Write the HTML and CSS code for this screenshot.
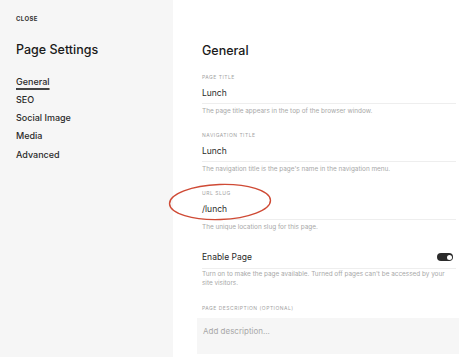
FILE: index.html
```html
<!DOCTYPE html>
<html lang="en">
<head>
	<meta charset="UTF-8">
	<title>Page Settings</title>
	<link rel="stylesheet" href="styles.css">
</head>
<body>
	<div class="panel">
		<aside class="sidebar">
			<div class="close">CLOSE</div>
			<h1 class="sidebar-title">Page Settings</h1>
			<nav class="menu">
				<a class="menu-item active">General</a>
				<a class="menu-item">SEO</a>
				<a class="menu-item">Social Image</a>
				<a class="menu-item">Media</a>
				<a class="menu-item">Advanced</a>
			</nav>
		</aside>

		<main class="content">
			<h2 class="heading">General</h2>

			<div class="field">
				<div class="label">PAGE TITLE</div>
				<div class="value">Lunch</div>
				<div class="hint">The page title appears in the top of the browser window.</div>
			</div>

			<div class="field">
				<div class="label">NAVIGATION TITLE</div>
				<div class="value">Lunch</div>
				<div class="hint">The navigation title is the page's name in the navigation menu.</div>
			</div>

			<div class="field slug">
				<svg class="circle" width="106" height="40" viewBox="0 0 106 40">
					<ellipse cx="53" cy="20" rx="50.5" ry="17.5" fill="none" stroke="#cf4a35" stroke-width="1.4" transform="rotate(-2 53 20)"/>
				</svg>
				<div class="label">URL SLUG</div>
				<div class="value">/lunch</div>
				<div class="hint">The unique location slug for this page.</div>
			</div>

			<div class="toggle-row">
				<span>Enable Page</span>
				<span class="toggle"></span>
			</div>
			<div class="hint hint-tight">Turn on to make the page available. Turned off pages can't be accessed by your site visitors.</div>

			<div class="label label-desc">PAGE DESCRIPTION (OPTIONAL)</div>
			<div class="textarea">Add description...</div>
		</main>
	</div>
</body>
</html>
```

FILE: styles.css
```css
/* base */
body {
	margin: 0;
	font-family: 'Inter', 'Noto Sans', sans-serif;
	color: #222;
	background: #fff;
}

.panel {
	display: flex;
	height: 357px;
	overflow: hidden;
}

/* sidebar */
.sidebar {
	width: 173px;
	flex-shrink: 0;
	box-sizing: border-box;
	padding: 14px 16px;
	background: #f6f6f6;
}

.close {
	font-size: 6px;
	line-height: 10px;
	font-weight: 700;
	letter-spacing: 0.4px;
	color: #333;
}

.sidebar-title {
	margin: 18px 0 0;
	font-size: 12.5px;
	line-height: 16px;
	font-weight: 500;
	color: #1a1a1a;
}

.menu {
	margin-top: 14.5px;
	display: flex;
	flex-direction: column;
	align-items: flex-start;
}

.menu-item {
	font-size: 9px;
	line-height: 18.3px;
	font-weight: 500;
	color: #2a2a2a;
}

.menu-item.active {
	text-decoration: underline;
	text-decoration-thickness: 1.5px;
	text-underline-offset: 3px;
	text-decoration-color: #444;
}

/* main */
.content {
	flex: 1;
	padding: 43px 18px 0 29px;
}

.heading {
	margin: 0 0 14px;
	font-size: 12.5px;
	line-height: 16px;
	font-weight: 500;
	color: #1a1a1a;
}

.field {
	margin-bottom: 15.5px;
}

.slug {
	position: relative;
}

.circle {
	position: absolute;
	left: -35px;
	top: -7px;
}

.label {
	font-size: 5px;
	line-height: 8px;
	letter-spacing: 0.5px;
	color: #a3a3a3;
}

.value {
	margin-top: 6px;
	padding-bottom: 4px;
	border-bottom: 1px solid #eeeeee;
	font-size: 8.5px;
	line-height: 12px;
	color: #2a2a2a;
}

.hint {
	margin-top: 2.5px;
	font-size: 6.4px;
	line-height: 9px;
	color: #a8a8a8;
}

.toggle-row {
	margin-top: 19.5px;
	display: flex;
	justify-content: space-between;
	align-items: center;
	padding-bottom: 5px;
	border-bottom: 1px solid #eeeeee;
	font-size: 8.5px;
	line-height: 12px;
	color: #2a2a2a;
}

.toggle {
	position: relative;
	width: 16px;
	height: 8px;
	margin-right: 3px;
	border-radius: 4px;
	background: #2b2b2b;
}

.toggle::after {
	content: '';
	position: absolute;
	right: 1.5px;
	top: 1.5px;
	width: 5px;
	height: 5px;
	border-radius: 50%;
	background: #fff;
}

.hint-tight {
	margin-top: 0.5px;
}

.label-desc {
	margin-top: 16.5px;
}

.textarea {
	margin: 6px -3px 0 -5px;
	height: 36px;
	box-sizing: border-box;
	padding: 8px 6px;
	background: #f6f6f6;
	font-size: 8px;
	line-height: 10px;
	color: #a8a8a8;
}
```
